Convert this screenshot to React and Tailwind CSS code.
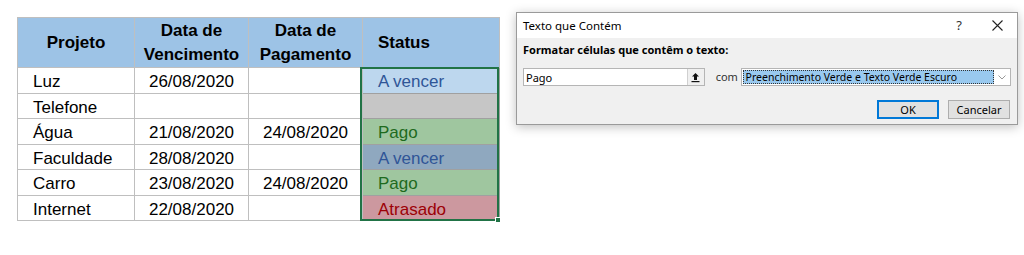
import React from 'react'

const rows = [
  { p: 'Luz', v: '26/08/2020', g: '', s: 'A vencer', bg: 'bg-[#bdd7ee]', fg: 'text-[#2f5597]' },
  { p: 'Telefone', v: '', g: '', s: '', bg: 'bg-[#c6c6c6]', fg: '' },
  { p: 'Água', v: '21/08/2020', g: '24/08/2020', s: 'Pago', bg: 'bg-[#9fc69f]', fg: 'text-[#1e6a1e]' },
  { p: 'Faculdade', v: '28/08/2020', g: '', s: 'A vencer', bg: 'bg-[#8fa8bf]', fg: 'text-[#2f5597]' },
  { p: 'Carro', v: '23/08/2020', g: '24/08/2020', s: 'Pago', bg: 'bg-[#9fc69f]', fg: 'text-[#1e6a1e]' },
  { p: 'Internet', v: '22/08/2020', g: '', s: 'Atrasado', bg: 'bg-[#cc989f]', fg: 'text-[#9c0006]' },
]

function Sheet() {
  return (
    <div className="relative font-['Liberation_Sans',sans-serif] text-[17px] text-black">
      <div className="grid grid-cols-[117px_114px_114px_137px] border-l border-t border-[#bfbfbf]">
        <div className="h-[50px] bg-[#9dc3e6] border-r border-b border-[#bfbfbf] flex items-center justify-center font-bold">Projeto</div>
        <div className="h-[50px] bg-[#9dc3e6] border-r border-b border-[#bfbfbf] flex flex-col items-center justify-center font-bold leading-[24px]">
          <span>Data de</span>
          <span>Vencimento</span>
        </div>
        <div className="h-[50px] bg-[#9dc3e6] border-r border-b border-[#bfbfbf] flex flex-col items-center justify-center font-bold leading-[24px]">
          <span>Data de</span>
          <span>Pagamento</span>
        </div>
        <div className="h-[50px] bg-[#9dc3e6] border-r border-b border-[#bfbfbf] flex items-center pl-[15px] font-bold">Status</div>
        {rows.map((r, i) => (
          <React.Fragment key={i}>
            <div className="h-[25.5px] border-r border-b border-[#bfbfbf] flex items-center pl-[15px] pt-[3px]">{r.p}</div>
            <div className="h-[25.5px] border-r border-b border-[#bfbfbf] flex items-center justify-center pt-[3px]">{r.v}</div>
            <div className="h-[25.5px] border-r border-b border-[#bfbfbf] flex items-center justify-center pt-[3px]">{r.g}</div>
            <div className={`h-[25.5px] border-r border-b border-[#a0a0a0] flex items-center pl-[15px] pt-[3px] ${r.bg} ${r.fg}`}>{r.s}</div>
          </React.Fragment>
        ))}
      </div>
      {/* selection outline */}
      <div className="absolute left-[343px] top-[50px] w-[139px] h-[154px] border-2 border-[#217346] pointer-events-none"></div>
      <div className="absolute left-[478px] top-[200px] w-[6px] h-[6px] bg-[#217346] border border-white"></div>
    </div>
  )
}

function Dialog() {
  return (
    <div className="w-[502px] h-[113px] border border-[#9a9a9a] bg-[#f0f0f0] shadow-[0_2px_10px_rgba(0,0,0,0.25)] font-['Noto_Sans',sans-serif] text-[11px] text-black flex flex-col">
      <div className="h-[25px] bg-white flex items-center pl-[6px] pr-[14px] text-[11.5px]">
        <span className="flex-1">Texto que Contém</span>
        <span className="mr-[30px] text-[13px] text-[#333]">?</span>
        <svg width="11" height="11" viewBox="0 0 11 11" className="mb-[1px]">
          <path d="M0.5 0.5 L10.5 10.5 M10.5 0.5 L0.5 10.5" stroke="#222" strokeWidth="1.1" fill="none" />
        </svg>
      </div>
      <div className="px-[6px] pt-[4px] flex flex-col">
        <div className="font-bold leading-[16px]">Formatar células que contêm o texto:</div>
        <div className="mt-[10px] flex items-center">
          <div className="w-[182px] h-[18px] bg-white border border-[#b5b5b5] flex items-center pl-[2px]">
            <span className="flex-1 leading-none">Pago</span>
            <div className="w-[17px] h-[16px] bg-[#f0f0f0] border-l border-[#d0d0d0] flex items-center justify-center">
              <svg width="9" height="11" viewBox="0 0 9 11">
                <path d="M4.5 1 L1 4.5 H3 V8 H6 V4.5 H8 Z" fill="#111" />
                <rect x="0.5" y="9" width="8" height="1.2" fill="#111" />
              </svg>
            </div>
          </div>
          <span className="ml-[11px] w-[25px] text-[#333]">com</span>
          <div className="w-[271px] h-[18px] bg-white border border-[#b5b5b5] flex items-center p-[1px]">
            <div className="flex-1 h-full bg-[#99c9ef] border border-dotted border-[#333] flex items-center pl-[2px] leading-none text-[10.5px]">
              Preenchimento Verde e Texto Verde Escuro
            </div>
            <div className="w-[15px] h-full flex items-center justify-center">
              <svg width="8" height="5" viewBox="0 0 8 5">
                <path d="M0.5 0.5 L4 4 L7.5 0.5" stroke="#999" strokeWidth="1" fill="none" />
              </svg>
            </div>
          </div>
        </div>
        <div className="mt-[14px] flex justify-end pr-[1px] gap-[9px]">
          <button className="w-[62px] h-[19px] bg-[#e1e1e1] border-2 border-[#0078d7] flex items-center justify-center leading-none">OK</button>
          <button className="w-[62px] h-[19px] bg-[#e1e1e1] border border-[#adadad] flex items-center justify-center leading-none">Cancelar</button>
        </div>
      </div>
    </div>
  )
}

export default function App() {
  return (
    <div className="w-[1024px] h-[255px] bg-white flex items-start">
      <div className="pl-[17px] pt-[17px]">
        <Sheet />
      </div>
      <div className="ml-[16px] pt-[12px]">
        <Dialog />
      </div>
    </div>
  )
}
